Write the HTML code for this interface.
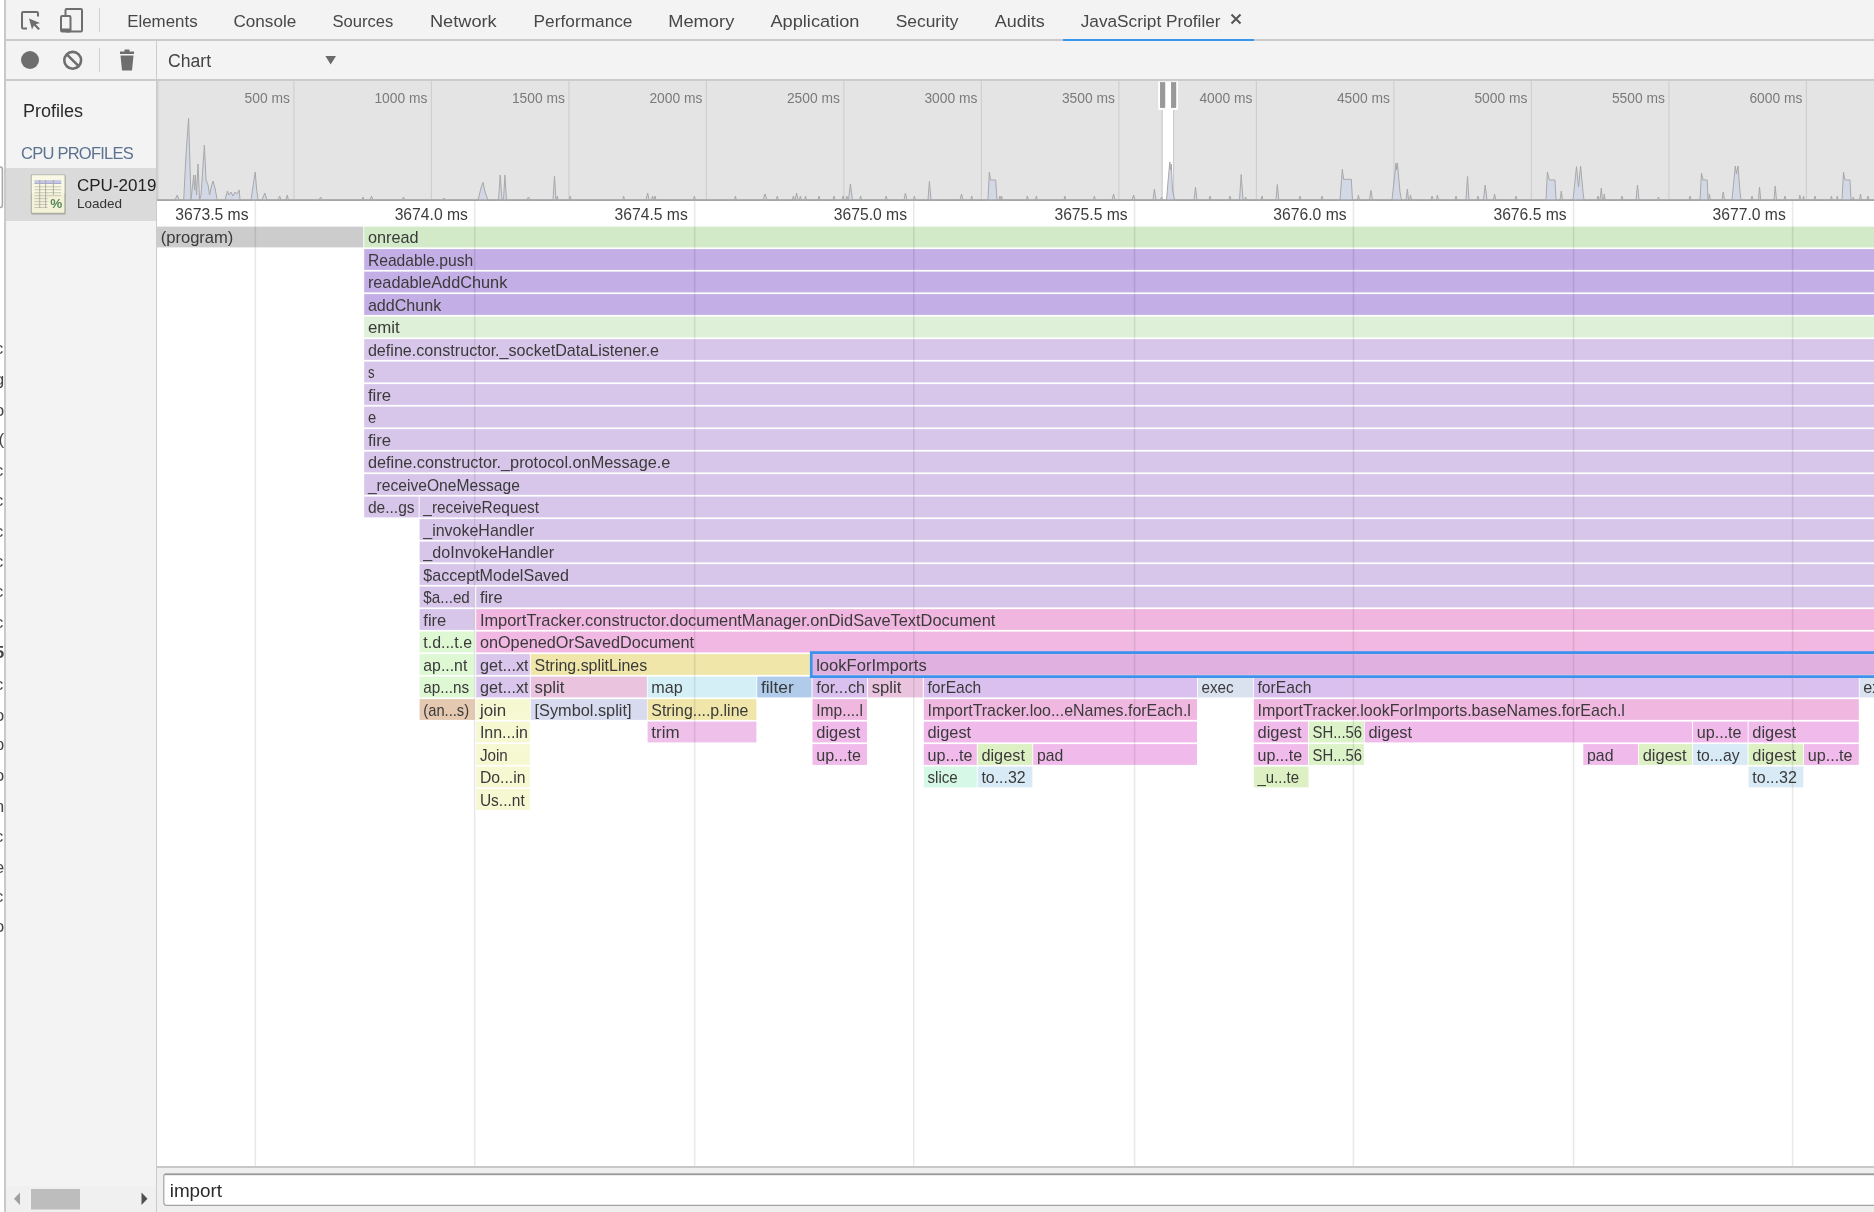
<!DOCTYPE html>
<html><head><meta charset="utf-8"><style>
*{margin:0;padding:0;box-sizing:border-box}
html,body{width:1874px;height:1212px;overflow:hidden;background:#fff;font-family:"Liberation Sans", sans-serif;-webkit-font-smoothing:antialiased}
.a{position:absolute}
.t{position:absolute;white-space:pre;line-height:1;will-change:transform}
svg{position:absolute;left:0;top:0;will-change:transform}
svg text{font-family:"Liberation Sans", sans-serif}
</style></head>
<body><div class="a" style="left:4px;top:0;width:2px;height:1212px;background:#c9c9c9"></div><div class="a" style="left:6px;top:0;width:1868px;height:39px;background:#f3f3f3"></div><div class="a" style="left:6px;top:39px;width:1868px;height:2px;background:#cbcbcb"></div><div class="a" style="left:6px;top:41px;width:1868px;height:38px;background:#f3f3f3"></div><div class="a" style="left:6px;top:79px;width:1868px;height:2px;background:#cbcbcb"></div><div class="a" style="left:6px;top:81px;width:150px;height:1131px;background:#f3f3f3"></div><div class="a" style="left:156px;top:41px;width:1px;height:1171px;background:#cbcbcb"></div><div class="a" style="left:6px;top:168px;width:150px;height:52.5px;background:#dadada"></div><svg width="1874" height="1212" viewBox="0 0 1874 1212"><g fill="none" stroke="#6e6e6e" stroke-width="2"><path d="M27 28.5 H23.2 Q22 28.5 22 27.3 V13.2 Q22 12 23.2 12 H36.8 Q38 12 38 13.2 V16.5"/><rect x="65.5" y="9" width="16.5" height="22.5" rx="1.2"/></g><circle cx="72.7" cy="60.3" r="8.4" fill="none" stroke="#6e6e6e" stroke-width="2.6"/><path d="M67.3 54.9 L78.1 65.7" stroke="#6e6e6e" stroke-width="2.6"/><path d="M29 18.5 L40 23 L35.8 24.3 L40 28.8 L38.2 30 L34 25.6 L32 29.5 Z" fill="#6e6e6e"/><rect x="61" y="16" width="9.5" height="15.5" rx="1.2" fill="#f3f3f3" stroke="#6e6e6e" stroke-width="2"/><rect x="61" y="28.5" width="9.5" height="3" fill="#6e6e6e"/><circle cx="30" cy="60" r="9" fill="#6e6e6e"/><rect x="99" y="8" width="1" height="24" fill="#d0d0d0"/><rect x="99" y="48" width="1" height="24" fill="#d0d0d0"/><path d="M120 51.5 h14 v2.5 h-14z M124.5 49.5 h5 v2 h-5z M120.5 55.5 h13 l-1.5 15 h-10z" fill="#6e6e6e"/><text x="127.2" y="27" font-size="17.2" fill="#474747" textLength="70.4" lengthAdjust="spacingAndGlyphs">Elements</text><text x="233.4" y="27" font-size="17.2" fill="#474747" textLength="62.9" lengthAdjust="spacingAndGlyphs">Console</text><text x="332.5" y="27" font-size="17.2" fill="#474747" textLength="60.9" lengthAdjust="spacingAndGlyphs">Sources</text><text x="429.9" y="27" font-size="17.2" fill="#474747" textLength="66.8" lengthAdjust="spacingAndGlyphs">Network</text><text x="533.6" y="27" font-size="17.2" fill="#474747" textLength="98.9" lengthAdjust="spacingAndGlyphs">Performance</text><text x="668.2" y="27" font-size="17.2" fill="#474747" textLength="66.1" lengthAdjust="spacingAndGlyphs">Memory</text><text x="770.5" y="27" font-size="17.2" fill="#474747" textLength="88.9" lengthAdjust="spacingAndGlyphs">Application</text><text x="895.7" y="27" font-size="17.2" fill="#474747" textLength="62.8" lengthAdjust="spacingAndGlyphs">Security</text><text x="994.8" y="27" font-size="17.2" fill="#474747" textLength="50" lengthAdjust="spacingAndGlyphs">Audits</text><text x="1080.7" y="27" font-size="17.2" fill="#474747" textLength="139.9" lengthAdjust="spacingAndGlyphs">JavaScript Profiler</text><path d="M1231.5 14.5 L1240.5 23.5 M1240.5 14.5 L1231.5 23.5" stroke="#555" stroke-width="2"/><path d="M325.4 56 h10.6 l-5.3 8.6z" fill="#6a6a6a"/><rect x="157" y="81" width="1717" height="119" fill="#e4e4e4"/><rect x="157" y="81" width="1.5" height="119" fill="#d0d0d0"/><rect x="293.3" y="81" width="1.2" height="119" fill="#cfcfcf"/><text x="289.8" y="102.5" font-size="13.8" fill="#7a7a7a" text-anchor="end">500 ms</text><rect x="430.8" y="81" width="1.2" height="119" fill="#cfcfcf"/><text x="427.3" y="102.5" font-size="13.8" fill="#7a7a7a" text-anchor="end">1000 ms</text><rect x="568.3" y="81" width="1.2" height="119" fill="#cfcfcf"/><text x="564.8" y="102.5" font-size="13.8" fill="#7a7a7a" text-anchor="end">1500 ms</text><rect x="705.8" y="81" width="1.2" height="119" fill="#cfcfcf"/><text x="702.3" y="102.5" font-size="13.8" fill="#7a7a7a" text-anchor="end">2000 ms</text><rect x="843.3" y="81" width="1.2" height="119" fill="#cfcfcf"/><text x="839.8" y="102.5" font-size="13.8" fill="#7a7a7a" text-anchor="end">2500 ms</text><rect x="980.8" y="81" width="1.2" height="119" fill="#cfcfcf"/><text x="977.3" y="102.5" font-size="13.8" fill="#7a7a7a" text-anchor="end">3000 ms</text><rect x="1118.3" y="81" width="1.2" height="119" fill="#cfcfcf"/><text x="1114.8" y="102.5" font-size="13.8" fill="#7a7a7a" text-anchor="end">3500 ms</text><rect x="1255.8" y="81" width="1.2" height="119" fill="#cfcfcf"/><text x="1252.3" y="102.5" font-size="13.8" fill="#7a7a7a" text-anchor="end">4000 ms</text><rect x="1393.3" y="81" width="1.2" height="119" fill="#cfcfcf"/><text x="1389.8" y="102.5" font-size="13.8" fill="#7a7a7a" text-anchor="end">4500 ms</text><rect x="1530.8" y="81" width="1.2" height="119" fill="#cfcfcf"/><text x="1527.3" y="102.5" font-size="13.8" fill="#7a7a7a" text-anchor="end">5000 ms</text><rect x="1668.3" y="81" width="1.2" height="119" fill="#cfcfcf"/><text x="1664.8" y="102.5" font-size="13.8" fill="#7a7a7a" text-anchor="end">5500 ms</text><rect x="1805.8" y="81" width="1.2" height="119" fill="#cfcfcf"/><text x="1802.3" y="102.5" font-size="13.8" fill="#7a7a7a" text-anchor="end">6000 ms</text><rect x="1162.7" y="110" width="10.3" height="90" fill="#fff"/><rect x="1158.2" y="81.5" width="19.8" height="28.3" fill="#fff"/><rect x="1160.3" y="82.6" width="4.6" height="25" fill="#999" stroke="#8a8a8a" stroke-width="0.6"/><rect x="1171.3" y="82.6" width="4.6" height="25" fill="#999" stroke="#8a8a8a" stroke-width="0.6"/><rect x="1161.6" y="110" width="1" height="90" fill="#c8c8c8"/><rect x="1173.1" y="110" width="1" height="90" fill="#c8c8c8"/><path d="M157.0 200.0 L175.0 200.0 L177.3 195.0 L179.0 200.0 L183.7 200.0 L185.8 158.0 L188.6 118.0 L191.0 200.0 L193.7 175.0 L194.6 190.0 L195.4 175.0 L196.5 195.0 L198.0 164.0 L199.6 200.0 L201.0 195.0 L204.4 145.0 L206.0 180.0 L208.2 185.5 L209.5 195.0 L211.0 188.0 L213.0 181.0 L215.0 188.0 L217.2 200.0 L225.0 200.0 L227.4 191.0 L229.0 195.0 L231.0 192.0 L233.0 196.0 L235.0 192.0 L237.0 194.0 L239.2 190.0 L240.0 200.0 L251.0 200.0 L255.2 172.0 L256.5 188.0 L258.0 200.0 L262.0 200.0 L264.8 193.0 L267.0 200.0 L278.0 200.0 L279.7 196.0 L281.0 200.0 L286.0 200.0 L287.2 195.0 L288.5 200.0 L319.0 200.0 L320.7 197.0 L322.0 200.0 L362.0 200.0 L363.0 197.0 L364.0 200.0 L370.0 200.0 L371.5 196.0 L373.0 200.0 L402.0 200.0 L403.5 197.0 L405.0 200.0 L443.0 200.0 L444.0 198.0 L445.0 200.0 L478.0 200.0 L481.0 188.0 L483.0 182.3 L485.0 192.0 L488.0 200.0 L498.5 200.0 L500.2 175.0 L502.0 200.0 L503.5 200.0 L504.9 175.0 L506.5 200.0 L527.0 200.0 L528.4 197.0 L530.0 200.0 L553.0 200.0 L554.5 176.0 L556.0 200.0 L556.4 200.0 L557.0 197.0 L557.4 196.0 L558.0 200.0 L558.4 200.0 L569.2 200.0 L570.2 196.0 L571.2 200.0 L622.6 200.0 L623.6 196.0 L624.6 200.0 L646.0 200.0 L647.7 193.0 L649.0 200.0 L651.5 200.0 L652.5 196.0 L653.5 200.0 L654.0 200.0 L655.0 196.0 L656.0 200.0 L693.4 200.0 L694.4 196.0 L695.4 200.0 L734.4 200.0 L735.4 196.0 L736.4 200.0 L763.0 200.0 L765.0 194.0 L767.0 200.0 L776.3 200.0 L777.3 196.0 L778.3 200.0 L792.4 200.0 L793.4 196.0 L794.4 200.0 L795.0 200.0 L796.6 193.0 L798.0 200.0 L799.4 200.0 L800.4 196.0 L801.4 200.0 L804.5 200.0 L805.5 196.0 L806.5 200.0 L818.0 200.0 L819.0 196.0 L820.0 200.0 L833.0 200.0 L834.0 196.0 L835.0 200.0 L842.0 200.0 L843.0 196.0 L844.0 200.0 L845.8 200.0 L846.8 196.0 L847.8 200.0 L848.5 200.0 L850.4 184.0 L852.5 200.0 L859.6 200.0 L860.6 196.0 L861.6 200.0 L885.2 200.0 L886.2 196.0 L887.2 200.0 L904.0 200.0 L905.4 193.0 L907.0 200.0 L913.4 200.0 L914.4 196.0 L915.4 200.0 L928.0 200.0 L929.4 181.4 L931.0 200.0 L960.0 200.0 L961.5 194.0 L963.0 200.0 L970.7 200.0 L971.7 196.0 L972.7 200.0 L988.0 200.0 L989.3 172.0 L990.5 180.0 L995.7 180.0 L997.0 200.0 L998.9 200.0 L999.9 196.0 L1000.5 200.0 L1000.9 200.0 L1001.5 196.0 L1002.5 200.0 L1026.4 200.0 L1027.4 196.0 L1028.4 200.0 L1035.4 200.0 L1036.4 196.0 L1037.4 200.0 L1063.9 200.0 L1064.9 196.0 L1065.9 200.0 L1093.4 200.0 L1094.4 196.0 L1095.4 200.0 L1112.0 200.0 L1113.6 194.0 L1115.0 200.0 L1132.0 200.0 L1133.7 195.0 L1135.0 200.0 L1153.0 200.0 L1154.4 189.2 L1156.0 200.0 L1160.5 200.0 L1161.5 197.0 L1162.5 200.0 L1166.5 200.0 L1167.9 183.0 L1169.8 162.0 L1170.5 170.0 L1171.3 164.0 L1172.5 190.0 L1174.6 200.0 L1194.0 200.0 L1195.5 187.3 L1197.0 200.0 L1209.0 200.0 L1210.0 196.0 L1211.0 200.0 L1229.0 200.0 L1230.0 196.0 L1231.0 200.0 L1239.5 200.0 L1241.2 174.5 L1243.0 200.0 L1244.5 200.0 L1245.6 197.0 L1246.5 200.0 L1261.0 200.0 L1262.0 196.0 L1263.0 200.0 L1276.0 200.0 L1277.3 184.6 L1278.8 200.0 L1299.0 200.0 L1300.0 196.0 L1301.0 200.0 L1321.0 200.0 L1322.0 196.0 L1323.0 200.0 L1340.0 200.0 L1342.3 169.3 L1343.6 179.3 L1351.3 179.3 L1352.5 200.0 L1357.5 200.0 L1358.4 195.0 L1359.5 200.0 L1369.5 200.0 L1370.9 190.4 L1372.5 200.0 L1392.0 200.0 L1396.0 163.0 L1396.7 170.0 L1397.4 163.0 L1400.0 192.0 L1401.5 200.0 L1406.0 200.0 L1407.4 189.0 L1408.5 200.0 L1409.5 200.0 L1410.5 195.0 L1411.5 200.0 L1431.0 200.0 L1432.0 196.0 L1433.0 200.0 L1436.5 200.0 L1437.4 195.0 L1438.5 200.0 L1455.0 200.0 L1456.0 196.0 L1457.0 200.0 L1466.0 200.0 L1467.5 176.4 L1469.0 200.0 L1477.0 200.0 L1478.0 196.0 L1479.0 200.0 L1483.5 200.0 L1485.2 185.0 L1487.0 200.0 L1493.5 200.0 L1494.5 194.0 L1496.0 200.0 L1515.0 200.0 L1516.0 196.0 L1517.0 200.0 L1546.0 200.0 L1547.4 172.0 L1549.4 180.0 L1555.0 180.0 L1556.0 200.0 L1560.0 200.0 L1561.3 191.0 L1562.5 200.0 L1573.0 200.0 L1576.5 166.6 L1578.5 187.0 L1580.6 166.0 L1583.0 192.0 L1584.0 200.0 L1597.0 200.0 L1598.0 196.0 L1599.0 200.0 L1600.0 200.0 L1601.3 188.0 L1602.5 200.0 L1603.5 200.0 L1604.3 194.0 L1605.0 200.0 L1621.0 200.0 L1622.0 196.0 L1623.0 200.0 L1636.0 200.0 L1637.5 185.0 L1639.0 200.0 L1657.5 200.0 L1658.4 197.0 L1659.5 200.0 L1689.0 200.0 L1690.0 196.0 L1691.0 200.0 L1700.0 200.0 L1701.5 173.0 L1703.0 180.0 L1707.2 180.0 L1708.0 200.0 L1708.5 200.0 L1709.3 194.0 L1710.5 200.0 L1722.0 200.0 L1723.2 192.0 L1724.5 200.0 L1732.0 200.0 L1735.3 166.0 L1736.5 174.0 L1738.0 166.0 L1740.0 192.0 L1741.0 200.0 L1751.0 200.0 L1752.0 196.0 L1753.0 200.0 L1758.5 200.0 L1759.5 187.0 L1760.8 200.0 L1774.0 200.0 L1775.2 186.0 L1776.5 200.0 L1784.0 200.0 L1785.0 196.0 L1786.0 200.0 L1799.0 200.0 L1799.8 195.0 L1800.8 200.0 L1802.8 200.0 L1803.5 196.0 L1804.3 200.0 L1814.0 200.0 L1815.0 196.0 L1816.0 200.0 L1830.5 200.0 L1831.4 196.0 L1832.3 200.0 L1836.5 200.0 L1837.3 196.0 L1838.2 200.0 L1842.0 200.0 L1843.5 172.0 L1845.0 180.0 L1850.0 180.0 L1851.0 200.0 L1852.5 200.0 L1853.3 197.0 L1854.0 200.0 L1859.5 200.0 L1860.5 194.0 L1861.5 200.0 L1867.0 200.0 L1868.0 196.0 L1869.0 200.0 L1874.0 200.0 Z" fill="#d3d8e6" stroke="#a9a9a9" stroke-width="1"/><rect x="157" y="199.6" width="1717" height="1.2" fill="#a0a0a0"/><text x="248.5" y="220" font-size="15.7" fill="#3c3c3c" text-anchor="end">3673.5 ms</text><text x="467.9" y="220" font-size="15.7" fill="#3c3c3c" text-anchor="end">3674.0 ms</text><text x="687.8" y="220" font-size="15.7" fill="#3c3c3c" text-anchor="end">3674.5 ms</text><text x="907.0" y="220" font-size="15.7" fill="#3c3c3c" text-anchor="end">3675.0 ms</text><text x="1127.7" y="220" font-size="15.7" fill="#3c3c3c" text-anchor="end">3675.5 ms</text><text x="1346.6" y="220" font-size="15.7" fill="#3c3c3c" text-anchor="end">3676.0 ms</text><text x="1566.7" y="220" font-size="15.7" fill="#3c3c3c" text-anchor="end">3676.5 ms</text><text x="1785.8" y="220" font-size="15.7" fill="#3c3c3c" text-anchor="end">3677.0 ms</text><defs><clipPath id="c0"><rect x="157" y="226.6" width="204.3" height="20.8"/></clipPath><clipPath id="c1"><rect x="364.2" y="226.6" width="2000.0" height="20.8"/></clipPath><clipPath id="c2"><rect x="364.2" y="249.1" width="2000.0" height="20.8"/></clipPath><clipPath id="c3"><rect x="364.2" y="271.6" width="2000.0" height="20.8"/></clipPath><clipPath id="c4"><rect x="364.2" y="294.1" width="2000.0" height="20.8"/></clipPath><clipPath id="c5"><rect x="364.2" y="316.6" width="2000.0" height="20.8"/></clipPath><clipPath id="c6"><rect x="364.2" y="339.1" width="2000.0" height="20.8"/></clipPath><clipPath id="c7"><rect x="364.2" y="361.6" width="2000.0" height="20.8"/></clipPath><clipPath id="c8"><rect x="364.2" y="384.1" width="2000.0" height="20.8"/></clipPath><clipPath id="c9"><rect x="364.2" y="406.6" width="2000.0" height="20.8"/></clipPath><clipPath id="c10"><rect x="364.2" y="429.1" width="2000.0" height="20.8"/></clipPath><clipPath id="c11"><rect x="364.2" y="451.6" width="2000.0" height="20.8"/></clipPath><clipPath id="c12"><rect x="364.2" y="474.1" width="2000.0" height="20.8"/></clipPath><clipPath id="c13"><rect x="364.2" y="496.6" width="52.5" height="20.8"/></clipPath><clipPath id="c14"><rect x="419.6" y="496.6" width="2000.0" height="20.8"/></clipPath><clipPath id="c15"><rect x="419.6" y="519.1" width="2000.0" height="20.8"/></clipPath><clipPath id="c16"><rect x="419.6" y="541.6" width="2000.0" height="20.8"/></clipPath><clipPath id="c17"><rect x="419.6" y="564.1" width="2000.0" height="20.8"/></clipPath><clipPath id="c18"><rect x="419.6" y="586.6" width="53.0" height="20.8"/></clipPath><clipPath id="c19"><rect x="476.2" y="586.6" width="2000.0" height="20.8"/></clipPath><clipPath id="c20"><rect x="419.6" y="609.1" width="53.0" height="20.8"/></clipPath><clipPath id="c21"><rect x="476.2" y="609.1" width="2000.0" height="20.8"/></clipPath><clipPath id="c22"><rect x="419.6" y="631.6" width="53.0" height="20.8"/></clipPath><clipPath id="c23"><rect x="476.2" y="631.6" width="2000.0" height="20.8"/></clipPath><clipPath id="c24"><rect x="419.6" y="654.1" width="53.0" height="20.8"/></clipPath><clipPath id="c25"><rect x="476.2" y="654.1" width="51.7" height="20.8"/></clipPath><clipPath id="c26"><rect x="530.8" y="654.1" width="277.0" height="20.8"/></clipPath><clipPath id="c27"><rect x="812.5" y="654.1" width="2000.0" height="20.8"/></clipPath><clipPath id="c28"><rect x="419.6" y="676.6" width="53.0" height="20.8"/></clipPath><clipPath id="c29"><rect x="476.2" y="676.6" width="51.7" height="20.8"/></clipPath><clipPath id="c30"><rect x="530.8" y="676.6" width="114.1" height="20.8"/></clipPath><clipPath id="c31"><rect x="647.6" y="676.6" width="106.8" height="20.8"/></clipPath><clipPath id="c32"><rect x="757.2" y="676.6" width="52.3" height="20.8"/></clipPath><clipPath id="c33"><rect x="812.5" y="676.6" width="52.5" height="20.8"/></clipPath><clipPath id="c34"><rect x="868" y="676.6" width="52.8" height="20.8"/></clipPath><clipPath id="c35"><rect x="923.8" y="676.6" width="271.2" height="20.8"/></clipPath><clipPath id="c36"><rect x="1197.8" y="676.6" width="53.2" height="20.8"/></clipPath><clipPath id="c37"><rect x="1253.8" y="676.6" width="603.0" height="20.8"/></clipPath><clipPath id="c38"><rect x="1859.6" y="676.6" width="2000.0" height="20.8"/></clipPath><clipPath id="c39"><rect x="419.6" y="699.1" width="53.0" height="20.8"/></clipPath><clipPath id="c40"><rect x="476.2" y="699.1" width="51.7" height="20.8"/></clipPath><clipPath id="c41"><rect x="530.8" y="699.1" width="114.1" height="20.8"/></clipPath><clipPath id="c42"><rect x="647.6" y="699.1" width="106.8" height="20.8"/></clipPath><clipPath id="c43"><rect x="812.5" y="699.1" width="52.5" height="20.8"/></clipPath><clipPath id="c44"><rect x="923.8" y="699.1" width="271.2" height="20.8"/></clipPath><clipPath id="c45"><rect x="1253.8" y="699.1" width="603.0" height="20.8"/></clipPath><clipPath id="c46"><rect x="476.2" y="721.6" width="51.7" height="20.8"/></clipPath><clipPath id="c47"><rect x="647.6" y="721.6" width="106.8" height="20.8"/></clipPath><clipPath id="c48"><rect x="812.5" y="721.6" width="52.5" height="20.8"/></clipPath><clipPath id="c49"><rect x="923.8" y="721.6" width="271.2" height="20.8"/></clipPath><clipPath id="c50"><rect x="1253.8" y="721.6" width="52.2" height="20.8"/></clipPath><clipPath id="c51"><rect x="1308.8" y="721.6" width="53.2" height="20.8"/></clipPath><clipPath id="c52"><rect x="1364.7" y="721.6" width="325.3" height="20.8"/></clipPath><clipPath id="c53"><rect x="1693" y="721.6" width="52.6" height="20.8"/></clipPath><clipPath id="c54"><rect x="1748.6" y="721.6" width="108.2" height="20.8"/></clipPath><clipPath id="c55"><rect x="476.2" y="744.1" width="51.7" height="20.8"/></clipPath><clipPath id="c56"><rect x="812.5" y="744.1" width="52.5" height="20.8"/></clipPath><clipPath id="c57"><rect x="923.8" y="744.1" width="51.0" height="20.8"/></clipPath><clipPath id="c58"><rect x="977.7" y="744.1" width="52.7" height="20.8"/></clipPath><clipPath id="c59"><rect x="1033.2" y="744.1" width="161.8" height="20.8"/></clipPath><clipPath id="c60"><rect x="1253.8" y="744.1" width="52.2" height="20.8"/></clipPath><clipPath id="c61"><rect x="1308.8" y="744.1" width="53.2" height="20.8"/></clipPath><clipPath id="c62"><rect x="1583.3" y="744.1" width="52.8" height="20.8"/></clipPath><clipPath id="c63"><rect x="1639" y="744.1" width="51.0" height="20.8"/></clipPath><clipPath id="c64"><rect x="1693" y="744.1" width="52.6" height="20.8"/></clipPath><clipPath id="c65"><rect x="1748.6" y="744.1" width="52.7" height="20.8"/></clipPath><clipPath id="c66"><rect x="1804" y="744.1" width="52.8" height="20.8"/></clipPath><clipPath id="c67"><rect x="476.2" y="766.6" width="51.7" height="20.8"/></clipPath><clipPath id="c68"><rect x="923.8" y="766.6" width="51.0" height="20.8"/></clipPath><clipPath id="c69"><rect x="977.7" y="766.6" width="52.7" height="20.8"/></clipPath><clipPath id="c70"><rect x="1253.8" y="766.6" width="52.7" height="20.8"/></clipPath><clipPath id="c71"><rect x="1748.6" y="766.6" width="52.7" height="20.8"/></clipPath><clipPath id="c72"><rect x="476.2" y="789.1" width="51.7" height="20.8"/></clipPath></defs><rect x="157" y="226.6" width="206.3" height="20.8" fill="#cccccc"/><rect x="364.2" y="226.6" width="1509.8" height="20.8" fill="#d2eac8"/><rect x="364.2" y="249.1" width="1509.8" height="20.8" fill="#c3aee6"/><rect x="364.2" y="271.6" width="1509.8" height="20.8" fill="#c3aee6"/><rect x="364.2" y="294.1" width="1509.8" height="20.8" fill="#c3aee6"/><rect x="364.2" y="316.6" width="1509.8" height="20.8" fill="#def0d8"/><rect x="364.2" y="339.1" width="1509.8" height="20.8" fill="#d8c6ea"/><rect x="364.2" y="361.6" width="1509.8" height="20.8" fill="#d8c6ea"/><rect x="364.2" y="384.1" width="1509.8" height="20.8" fill="#d8c6ea"/><rect x="364.2" y="406.6" width="1509.8" height="20.8" fill="#d8c6ea"/><rect x="364.2" y="429.1" width="1509.8" height="20.8" fill="#d8c6ea"/><rect x="364.2" y="451.6" width="1509.8" height="20.8" fill="#d8c6ea"/><rect x="364.2" y="474.1" width="1509.8" height="20.8" fill="#d8c6ea"/><rect x="364.2" y="496.6" width="54.5" height="20.8" fill="#d8c6ea"/><rect x="419.6" y="496.6" width="1454.4" height="20.8" fill="#d8c6ea"/><rect x="419.6" y="519.1" width="1454.4" height="20.8" fill="#d8c6ea"/><rect x="419.6" y="541.6" width="1454.4" height="20.8" fill="#d8c6ea"/><rect x="419.6" y="564.1" width="1454.4" height="20.8" fill="#d8c6ea"/><rect x="419.6" y="586.6" width="55.0" height="20.8" fill="#d8c6ea"/><rect x="476.2" y="586.6" width="1397.8" height="20.8" fill="#d8c6ea"/><rect x="419.6" y="609.1" width="55.0" height="20.8" fill="#d8c6ea"/><rect x="476.2" y="609.1" width="1397.8" height="20.8" fill="#f0b6e0"/><rect x="419.6" y="631.6" width="55.0" height="20.8" fill="#def8d4"/><rect x="476.2" y="631.6" width="1397.8" height="20.8" fill="#f0b8e2"/><rect x="419.6" y="654.1" width="55.0" height="20.8" fill="#def8d4"/><rect x="476.2" y="654.1" width="53.7" height="20.8" fill="#dac6ec"/><rect x="530.8" y="654.1" width="279.0" height="20.8" fill="#f0e6aa"/><rect x="812.5" y="654.1" width="1061.5" height="20.8" fill="#e0b0e0"/><rect x="419.6" y="676.6" width="55.0" height="20.8" fill="#def8d4"/><rect x="476.2" y="676.6" width="53.7" height="20.8" fill="#dac6ec"/><rect x="530.8" y="676.6" width="116.1" height="20.8" fill="#eac4de"/><rect x="647.6" y="676.6" width="108.8" height="20.8" fill="#d4f0f6"/><rect x="757.2" y="676.6" width="54.3" height="20.8" fill="#b0ccea"/><rect x="812.5" y="676.6" width="54.5" height="20.8" fill="#dac0ee"/><rect x="868" y="676.6" width="54.8" height="20.8" fill="#eac4de"/><rect x="923.8" y="676.6" width="273.2" height="20.8" fill="#dac0ee"/><rect x="1197.8" y="676.6" width="55.2" height="20.8" fill="#dae2f0"/><rect x="1253.8" y="676.6" width="605.0" height="20.8" fill="#dac0ee"/><rect x="1859.6" y="676.6" width="14.4" height="20.8" fill="#dae2f0"/><rect x="419.6" y="699.1" width="55.0" height="20.8" fill="#e4c8b0"/><rect x="476.2" y="699.1" width="53.7" height="20.8" fill="#f6f8d2"/><rect x="530.8" y="699.1" width="116.1" height="20.8" fill="#d8daf0"/><rect x="647.6" y="699.1" width="108.8" height="20.8" fill="#f0e6aa"/><rect x="812.5" y="699.1" width="54.5" height="20.8" fill="#f0b8e0"/><rect x="923.8" y="699.1" width="273.2" height="20.8" fill="#f0b8e0"/><rect x="1253.8" y="699.1" width="605.0" height="20.8" fill="#f0b8e0"/><rect x="476.2" y="721.6" width="53.7" height="20.8" fill="#f6f8d2"/><rect x="647.6" y="721.6" width="108.8" height="20.8" fill="#eec0ea"/><rect x="812.5" y="721.6" width="54.5" height="20.8" fill="#f0baea"/><rect x="923.8" y="721.6" width="273.2" height="20.8" fill="#f0baea"/><rect x="1253.8" y="721.6" width="54.2" height="20.8" fill="#f0baea"/><rect x="1308.8" y="721.6" width="55.2" height="20.8" fill="#dcf2c8"/><rect x="1364.7" y="721.6" width="327.3" height="20.8" fill="#f0baea"/><rect x="1693" y="721.6" width="54.6" height="20.8" fill="#f0baea"/><rect x="1748.6" y="721.6" width="110.2" height="20.8" fill="#f0baea"/><rect x="476.2" y="744.1" width="53.7" height="20.8" fill="#f6f8d2"/><rect x="812.5" y="744.1" width="54.5" height="20.8" fill="#f0baea"/><rect x="923.8" y="744.1" width="53.0" height="20.8" fill="#f0baea"/><rect x="977.7" y="744.1" width="54.7" height="20.8" fill="#dcf0c4"/><rect x="1033.2" y="744.1" width="163.8" height="20.8" fill="#f0baea"/><rect x="1253.8" y="744.1" width="54.2" height="20.8" fill="#f0baea"/><rect x="1308.8" y="744.1" width="55.2" height="20.8" fill="#dcf2c8"/><rect x="1583.3" y="744.1" width="54.8" height="20.8" fill="#f0baea"/><rect x="1639" y="744.1" width="53.0" height="20.8" fill="#dcf0c4"/><rect x="1693" y="744.1" width="54.6" height="20.8" fill="#d8eaf6"/><rect x="1748.6" y="744.1" width="54.7" height="20.8" fill="#dcf0c4"/><rect x="1804" y="744.1" width="54.8" height="20.8" fill="#f0baea"/><rect x="476.2" y="766.6" width="53.7" height="20.8" fill="#f6f8d2"/><rect x="923.8" y="766.6" width="53.0" height="20.8" fill="#d6f8e6"/><rect x="977.7" y="766.6" width="54.7" height="20.8" fill="#d8eaf6"/><rect x="1253.8" y="766.6" width="54.7" height="20.8" fill="#dcf0c4"/><rect x="1748.6" y="766.6" width="54.7" height="20.8" fill="#d8eaf6"/><rect x="476.2" y="789.1" width="53.7" height="20.8" fill="#f6f8d2"/><text x="160.7" y="243" font-size="16.2" fill="#3a3a3a" clip-path="url(#c0)" textLength="72.7" lengthAdjust="spacingAndGlyphs">(program)</text><text x="367.9" y="243" font-size="16.2" fill="#3a3a3a" clip-path="url(#c1)" textLength="50.6" lengthAdjust="spacingAndGlyphs">onread</text><text x="367.9" y="266" font-size="16.2" fill="#3a3a3a" clip-path="url(#c2)" textLength="105.3" lengthAdjust="spacingAndGlyphs">Readable.push</text><text x="367.9" y="288" font-size="16.2" fill="#3a3a3a" clip-path="url(#c3)" textLength="139.4" lengthAdjust="spacingAndGlyphs">readableAddChunk</text><text x="367.9" y="311" font-size="16.2" fill="#3a3a3a" clip-path="url(#c4)" textLength="73.4" lengthAdjust="spacingAndGlyphs">addChunk</text><text x="367.9" y="333" font-size="16.2" fill="#3a3a3a" clip-path="url(#c5)" textLength="31.8" lengthAdjust="spacingAndGlyphs">emit</text><text x="367.9" y="356" font-size="16.2" fill="#3a3a3a" clip-path="url(#c6)" textLength="291.2" lengthAdjust="spacingAndGlyphs">define.constructor._socketDataListener.e</text><text x="367.9" y="378" font-size="16.2" fill="#3a3a3a" clip-path="url(#c7)" textLength="6.6" lengthAdjust="spacingAndGlyphs">s</text><text x="367.9" y="401" font-size="16.2" fill="#3a3a3a" clip-path="url(#c8)" textLength="23.3" lengthAdjust="spacingAndGlyphs">fire</text><text x="367.9" y="423" font-size="16.2" fill="#3a3a3a" clip-path="url(#c9)" textLength="8.2" lengthAdjust="spacingAndGlyphs">e</text><text x="367.9" y="446" font-size="16.2" fill="#3a3a3a" clip-path="url(#c10)" textLength="23.3" lengthAdjust="spacingAndGlyphs">fire</text><text x="367.9" y="468" font-size="16.2" fill="#3a3a3a" clip-path="url(#c11)" textLength="302.5" lengthAdjust="spacingAndGlyphs">define.constructor._protocol.onMessage.e</text><text x="367.9" y="491" font-size="16.2" fill="#3a3a3a" clip-path="url(#c12)" textLength="152.0" lengthAdjust="spacingAndGlyphs">_receiveOneMessage</text><text x="367.9" y="513" font-size="16.2" fill="#3a3a3a" clip-path="url(#c13)" textLength="46.7" lengthAdjust="spacingAndGlyphs">de...gs</text><text x="423.3" y="513" font-size="16.2" fill="#3a3a3a" clip-path="url(#c14)" textLength="115.8" lengthAdjust="spacingAndGlyphs">_receiveRequest</text><text x="423.3" y="536" font-size="16.2" fill="#3a3a3a" clip-path="url(#c15)" textLength="111.0" lengthAdjust="spacingAndGlyphs">_invokeHandler</text><text x="423.3" y="558" font-size="16.2" fill="#3a3a3a" clip-path="url(#c16)" textLength="130.8" lengthAdjust="spacingAndGlyphs">_doInvokeHandler</text><text x="423.3" y="581" font-size="16.2" fill="#3a3a3a" clip-path="url(#c17)" textLength="145.7" lengthAdjust="spacingAndGlyphs">$acceptModelSaved</text><text x="423.3" y="603" font-size="16.2" fill="#3a3a3a" clip-path="url(#c18)" textLength="46.5" lengthAdjust="spacingAndGlyphs">$a...ed</text><text x="479.9" y="603" font-size="16.2" fill="#3a3a3a" clip-path="url(#c19)" textLength="22.8" lengthAdjust="spacingAndGlyphs">fire</text><text x="423.3" y="626" font-size="16.2" fill="#3a3a3a" clip-path="url(#c20)" textLength="23.0" lengthAdjust="spacingAndGlyphs">fire</text><text x="479.9" y="626" font-size="16.2" fill="#3a3a3a" clip-path="url(#c21)" textLength="515.5" lengthAdjust="spacingAndGlyphs">ImportTracker.constructor.documentManager.onDidSaveTextDocument</text><text x="423.3" y="648" font-size="16.2" fill="#3a3a3a" clip-path="url(#c22)" textLength="48.7" lengthAdjust="spacingAndGlyphs">t.d...t.e</text><text x="479.9" y="648" font-size="16.2" fill="#3a3a3a" clip-path="url(#c23)" textLength="214.2" lengthAdjust="spacingAndGlyphs">onOpenedOrSavedDocument</text><text x="423.3" y="671" font-size="16.2" fill="#3a3a3a" clip-path="url(#c24)" textLength="44.0" lengthAdjust="spacingAndGlyphs">ap...nt</text><text x="479.9" y="671" font-size="16.2" fill="#3a3a3a" clip-path="url(#c25)" textLength="48.7" lengthAdjust="spacingAndGlyphs">get...xt</text><text x="534.5" y="671" font-size="16.2" fill="#3a3a3a" clip-path="url(#c26)" textLength="112.7" lengthAdjust="spacingAndGlyphs">String.splitLines</text><text x="816.2" y="671" font-size="16.2" fill="#3a3a3a" clip-path="url(#c27)" textLength="110.5" lengthAdjust="spacingAndGlyphs">lookForImports</text><text x="423.3" y="693" font-size="16.2" fill="#3a3a3a" clip-path="url(#c28)" textLength="45.8" lengthAdjust="spacingAndGlyphs">ap...ns</text><text x="479.9" y="693" font-size="16.2" fill="#3a3a3a" clip-path="url(#c29)" textLength="48.7" lengthAdjust="spacingAndGlyphs">get...xt</text><text x="534.5" y="693" font-size="16.2" fill="#3a3a3a" clip-path="url(#c30)" textLength="29.8" lengthAdjust="spacingAndGlyphs">split</text><text x="651.3" y="693" font-size="16.2" fill="#3a3a3a" clip-path="url(#c31)" textLength="31.4" lengthAdjust="spacingAndGlyphs">map</text><text x="760.9" y="693" font-size="16.2" fill="#3a3a3a" clip-path="url(#c32)" textLength="32.9" lengthAdjust="spacingAndGlyphs">filter</text><text x="816.2" y="693" font-size="16.2" fill="#3a3a3a" clip-path="url(#c33)" textLength="49.0" lengthAdjust="spacingAndGlyphs">for...ch</text><text x="871.7" y="693" font-size="16.2" fill="#3a3a3a" clip-path="url(#c34)" textLength="29.7" lengthAdjust="spacingAndGlyphs">split</text><text x="927.5" y="693" font-size="16.2" fill="#3a3a3a" clip-path="url(#c35)" textLength="53.6" lengthAdjust="spacingAndGlyphs">forEach</text><text x="1201.5" y="693" font-size="16.2" fill="#3a3a3a" clip-path="url(#c36)" textLength="32.2" lengthAdjust="spacingAndGlyphs">exec</text><text x="1257.5" y="693" font-size="16.2" fill="#3a3a3a" clip-path="url(#c37)" textLength="53.9" lengthAdjust="spacingAndGlyphs">forEach</text><text x="1863.3" y="693" font-size="16.2" fill="#3a3a3a" clip-path="url(#c38)">exec</text><text x="423.3" y="716" font-size="16.2" fill="#3a3a3a" clip-path="url(#c39)" textLength="45.8" lengthAdjust="spacingAndGlyphs">(an...s)</text><text x="479.9" y="716" font-size="16.2" fill="#3a3a3a" clip-path="url(#c40)" textLength="26.3" lengthAdjust="spacingAndGlyphs">join</text><text x="534.5" y="716" font-size="16.2" fill="#3a3a3a" clip-path="url(#c41)" textLength="97.0" lengthAdjust="spacingAndGlyphs">[Symbol.split]</text><text x="651.3" y="716" font-size="16.2" fill="#3a3a3a" clip-path="url(#c42)" textLength="97.0" lengthAdjust="spacingAndGlyphs">String....p.line</text><text x="816.2" y="716" font-size="16.2" fill="#3a3a3a" clip-path="url(#c43)" textLength="46.7" lengthAdjust="spacingAndGlyphs">Imp....l</text><text x="927.5" y="716" font-size="16.2" fill="#3a3a3a" clip-path="url(#c44)" textLength="263.4" lengthAdjust="spacingAndGlyphs">ImportTracker.loo...eNames.forEach.l</text><text x="1257.5" y="716" font-size="16.2" fill="#3a3a3a" clip-path="url(#c45)" textLength="367.4" lengthAdjust="spacingAndGlyphs">ImportTracker.lookForImports.baseNames.forEach.l</text><text x="479.9" y="738" font-size="16.2" fill="#3a3a3a" clip-path="url(#c46)" textLength="48.0" lengthAdjust="spacingAndGlyphs">Inn...in</text><text x="651.3" y="738" font-size="16.2" fill="#3a3a3a" clip-path="url(#c47)" textLength="28.2" lengthAdjust="spacingAndGlyphs">trim</text><text x="816.2" y="738" font-size="16.2" fill="#3a3a3a" clip-path="url(#c48)" textLength="44.1" lengthAdjust="spacingAndGlyphs">digest</text><text x="927.5" y="738" font-size="16.2" fill="#3a3a3a" clip-path="url(#c49)" textLength="43.6" lengthAdjust="spacingAndGlyphs">digest</text><text x="1257.5" y="738" font-size="16.2" fill="#3a3a3a" clip-path="url(#c50)" textLength="44.0" lengthAdjust="spacingAndGlyphs">digest</text><text x="1312.5" y="738" font-size="16.2" fill="#3a3a3a" clip-path="url(#c51)" textLength="49.6" lengthAdjust="spacingAndGlyphs">SH...56</text><text x="1368.4" y="738" font-size="16.2" fill="#3a3a3a" clip-path="url(#c52)" textLength="43.7" lengthAdjust="spacingAndGlyphs">digest</text><text x="1696.7" y="738" font-size="16.2" fill="#3a3a3a" clip-path="url(#c53)" textLength="44.9" lengthAdjust="spacingAndGlyphs">up...te</text><text x="1752.3" y="738" font-size="16.2" fill="#3a3a3a" clip-path="url(#c54)" textLength="43.9" lengthAdjust="spacingAndGlyphs">digest</text><text x="479.9" y="761" font-size="16.2" fill="#3a3a3a" clip-path="url(#c55)" textLength="27.9" lengthAdjust="spacingAndGlyphs">Join</text><text x="816.2" y="761" font-size="16.2" fill="#3a3a3a" clip-path="url(#c56)" textLength="44.8" lengthAdjust="spacingAndGlyphs">up...te</text><text x="927.5" y="761" font-size="16.2" fill="#3a3a3a" clip-path="url(#c57)" textLength="44.9" lengthAdjust="spacingAndGlyphs">up...te</text><text x="981.4" y="761" font-size="16.2" fill="#3a3a3a" clip-path="url(#c58)" textLength="43.6" lengthAdjust="spacingAndGlyphs">digest</text><text x="1036.9" y="761" font-size="16.2" fill="#3a3a3a" clip-path="url(#c59)" textLength="26.3" lengthAdjust="spacingAndGlyphs">pad</text><text x="1257.5" y="761" font-size="16.2" fill="#3a3a3a" clip-path="url(#c60)" textLength="44.6" lengthAdjust="spacingAndGlyphs">up...te</text><text x="1312.5" y="761" font-size="16.2" fill="#3a3a3a" clip-path="url(#c61)" textLength="49.6" lengthAdjust="spacingAndGlyphs">SH...56</text><text x="1587.0" y="761" font-size="16.2" fill="#3a3a3a" clip-path="url(#c62)" textLength="26.5" lengthAdjust="spacingAndGlyphs">pad</text><text x="1642.7" y="761" font-size="16.2" fill="#3a3a3a" clip-path="url(#c63)" textLength="43.9" lengthAdjust="spacingAndGlyphs">digest</text><text x="1696.7" y="761" font-size="16.2" fill="#3a3a3a" clip-path="url(#c64)" textLength="42.9" lengthAdjust="spacingAndGlyphs">to...ay</text><text x="1752.3" y="761" font-size="16.2" fill="#3a3a3a" clip-path="url(#c65)" textLength="43.9" lengthAdjust="spacingAndGlyphs">digest</text><text x="1807.7" y="761" font-size="16.2" fill="#3a3a3a" clip-path="url(#c66)" textLength="44.9" lengthAdjust="spacingAndGlyphs">up...te</text><text x="479.9" y="783" font-size="16.2" fill="#3a3a3a" clip-path="url(#c67)" textLength="45.5" lengthAdjust="spacingAndGlyphs">Do...in</text><text x="927.5" y="783" font-size="16.2" fill="#3a3a3a" clip-path="url(#c68)" textLength="30.3" lengthAdjust="spacingAndGlyphs">slice</text><text x="981.4" y="783" font-size="16.2" fill="#3a3a3a" clip-path="url(#c69)" textLength="44.2" lengthAdjust="spacingAndGlyphs">to...32</text><text x="1257.5" y="783" font-size="16.2" fill="#3a3a3a" clip-path="url(#c70)" textLength="41.5" lengthAdjust="spacingAndGlyphs">_u...te</text><text x="1752.3" y="783" font-size="16.2" fill="#3a3a3a" clip-path="url(#c71)" textLength="44.5" lengthAdjust="spacingAndGlyphs">to...32</text><text x="479.9" y="806" font-size="16.2" fill="#3a3a3a" clip-path="url(#c72)" textLength="44.8" lengthAdjust="spacingAndGlyphs">Us...nt</text><rect x="254.6" y="201" width="1.5" height="965" fill="#000" fill-opacity="0.09"/><rect x="473.9" y="201" width="1.5" height="965" fill="#000" fill-opacity="0.09"/><rect x="693.9" y="201" width="1.5" height="965" fill="#000" fill-opacity="0.09"/><rect x="913.0" y="201" width="1.5" height="965" fill="#000" fill-opacity="0.09"/><rect x="1133.8" y="201" width="1.5" height="965" fill="#000" fill-opacity="0.09"/><rect x="1352.7" y="201" width="1.5" height="965" fill="#000" fill-opacity="0.09"/><rect x="1572.8" y="201" width="1.5" height="965" fill="#000" fill-opacity="0.09"/><rect x="1791.8" y="201" width="1.5" height="965" fill="#000" fill-opacity="0.09"/><rect x="811.3" y="652.6" width="1070" height="24" fill="none" stroke="#3d93ec" stroke-width="2.8"/><rect x="157" y="1166" width="1717" height="2" fill="#c8c8c8"/><rect x="157" y="1168" width="1717" height="44" fill="#efefef"/><rect x="163.8" y="1173.8" width="1720" height="31.5" rx="2.5" fill="#fff" stroke="#a3a3a3" stroke-width="1.2"/><rect x="165" y="1174" width="1710" height="1.2" fill="#9a9a9a"/><text x="169.7" y="1197" font-size="17.6" fill="#2a2a2a" textLength="52.4" lengthAdjust="spacingAndGlyphs">import</text><g><rect x="31.2" y="175.4" width="34.6" height="39.4" rx="1" fill="#b8b8b0"/><rect x="30.8" y="174.4" width="34.6" height="39.4" rx="1" fill="#a6a69c"/><rect x="31.8" y="175.4" width="32.6" height="37.4" fill="#f3f2d8"/><rect x="31.8" y="175.4" width="32.6" height="18" fill="#f8f8e4"/><rect x="34.5" y="180.1" width="26.7" height="3.8" fill="#c6c6e4"/><rect x="34.5" y="183" width="26.7" height="0.9" fill="#a8a8cc"/><g fill="#c6c6b6"><rect x="34.5" y="186.3" width="26.7" height="1" /><rect x="34.5" y="189.2" width="26.7" height="1" /><rect x="34.5" y="192.2" width="26.7" height="1" /><rect x="34.5" y="195.2" width="26.7" height="1" /><rect x="34.5" y="198.1" width="13" height="1" /><rect x="34.5" y="201.1" width="13" height="1" /><rect x="34.5" y="204.0" width="13" height="1" /><rect x="34.5" y="207.0" width="13" height="1" /></g><g fill="#aaa9a0"><rect x="39.3" y="180" width="0.9" height="28"/><rect x="45.2" y="180" width="0.9" height="28"/><rect x="52.9" y="180" width="0.9" height="15"/></g><text x="50.3" y="208.3" font-size="13.5" font-weight="bold" fill="#58885b">%</text></g><path d="M-2 167 H0.3 Q2.4 167 2.4 169.5 V205 Q2.4 207.5 0.3 207.5 H-2" fill="none" stroke="#a8a8a8" stroke-width="1.6"/><text x="-5.2" y="354.0" font-size="17" fill="#444">c</text><text x="-5.2" y="385.0" font-size="17" fill="#444">g</text><text x="-5.2" y="415.6" font-size="17" fill="#444">o</text><text x="-1.5" y="445.0" font-size="17" fill="#444">(</text><text x="-5.2" y="475.7" font-size="17" fill="#444">c</text><text x="-5.2" y="506.0" font-size="17" fill="#444">c</text><text x="-5.2" y="537.0" font-size="17" fill="#444">c</text><text x="-5.2" y="566.5" font-size="17" fill="#444">c</text><text x="-5.2" y="597.0" font-size="17" fill="#444">c</text><text x="-5.2" y="627.8" font-size="17" fill="#444">c</text><text x="-5.2" y="658.0" font-size="17" fill="#444" font-weight="bold">5</text><text x="-5.2" y="690.0" font-size="17" fill="#444">c</text><text x="-5.2" y="720.7" font-size="17" fill="#444">o</text><text x="-5.2" y="750.0" font-size="17" fill="#444">p</text><text x="-5.2" y="780.8" font-size="17" fill="#444">o</text><text x="-5.2" y="811.5" font-size="17" fill="#444">n</text><text x="-5.2" y="842.0" font-size="17" fill="#444">c</text><text x="-5.2" y="873.0" font-size="17" fill="#444">e</text><text x="-5.2" y="902.0" font-size="17" fill="#444">c</text><text x="-5.2" y="931.7" font-size="17" fill="#444">o</text><rect x="6" y="1186" width="150" height="26" fill="#f0f0f0"/><path d="M20 1192.5 v12.5 l-6 -6.25z" fill="#a0a0a0"/><rect x="31" y="1189" width="49" height="20.5" fill="#bdbdbd"/><path d="M141.5 1192.5 v12.5 l6 -6.25z" fill="#505050"/></svg><div class="a" style="left:1063px;top:38.5px;width:191px;height:2.5px;background:#3a98ea"></div><div class="t" style="left:22.5px;top:102px;font-size:18px;color:#2a2a2a">Profiles</div><div class="t" style="left:21px;top:145px;font-size:16.5px;letter-spacing:-0.75px;color:#5a7190">CPU PROFILES</div><div class="t" style="left:76.5px;top:177px;font-size:17px;color:#222">CPU-2019</div><div class="t" style="left:76.5px;top:196.5px;font-size:13.5px;color:#333">Loaded</div><div class="t" style="left:167.8px;top:52.5px;font-size:17.6px;color:#444">Chart</div></body></html>
